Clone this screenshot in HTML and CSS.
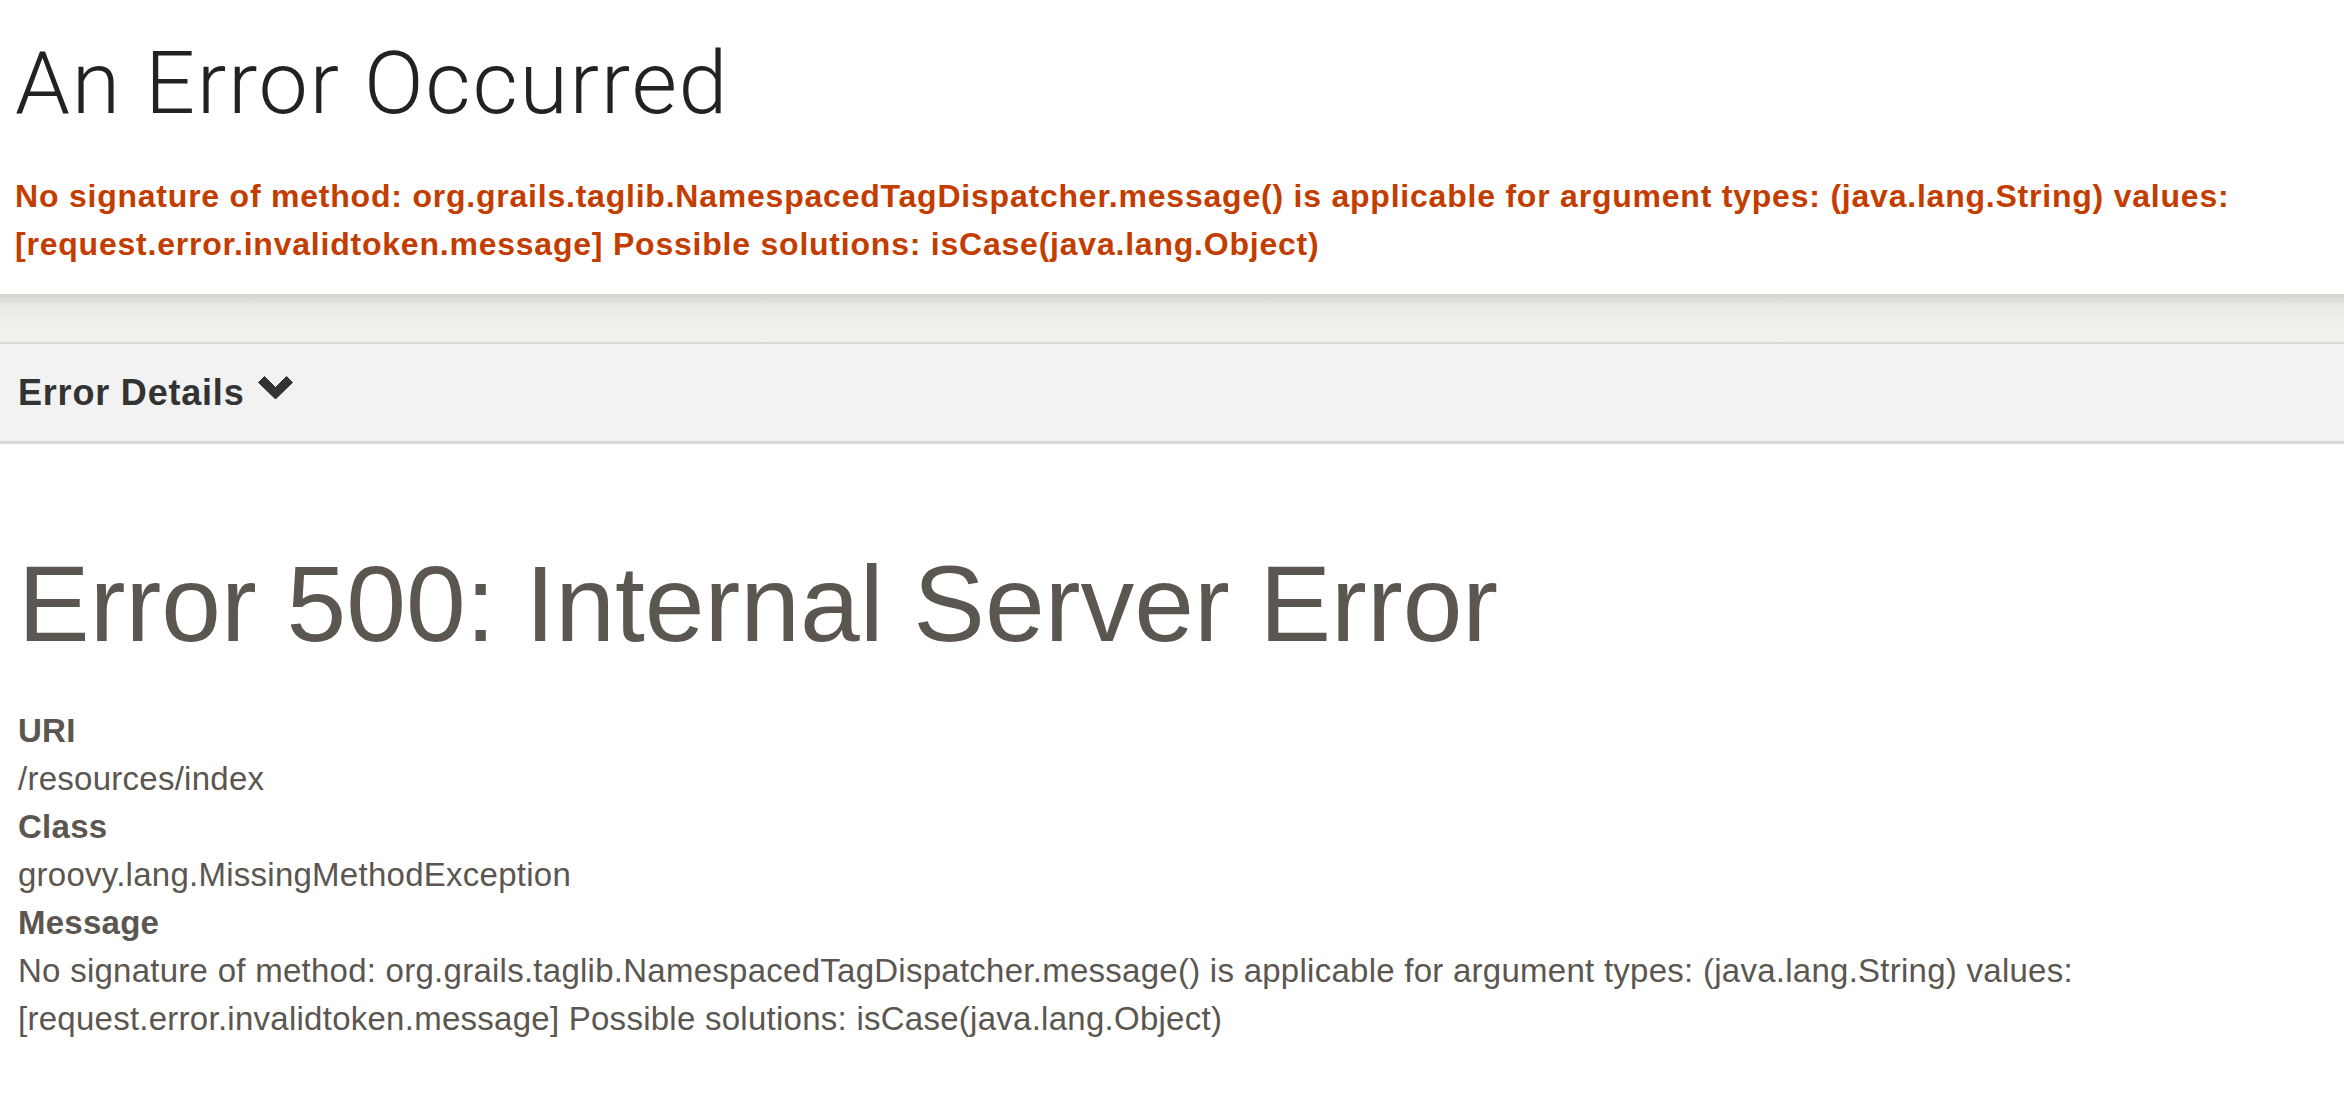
FILE: index.html
```html
<!DOCTYPE html>
<html lang="en">
<head>
<meta charset="utf-8">
<title>An Error Occurred</title>
<link rel="stylesheet" href="styles.css">
</head>
<body>
<header class="top">
  <h1 class="title">An Error Occurred</h1>
  <p class="lead">No signature of method: org.grails.taglib.NamespacedTagDispatcher.message() is applicable for argument types: (java.lang.String) values: [request.error.invalidtoken.message] Possible solutions: isCase(java.lang.Object)</p>
</header>
<div class="band"></div>
<div class="details-bar">
  <span class="details-label">Error Details</span>
  <svg class="chevron" viewBox="0 0 35 23" width="35" height="23" aria-hidden="true">
    <polygon points="0.5,6.5 6.5,0.5 17.5,11.5 28.5,0.5 34.5,6.5 17.5,23" fill="#333333" stroke="#333333" stroke-width="1" stroke-linejoin="round"/>
  </svg>
</div>
<main class="content">
  <h1 class="code">Error 500: Internal Server Error</h1>
  <dl class="info">
    <dt>URI</dt>
    <dd>/resources/index</dd>
    <dt>Class</dt>
    <dd>groovy.lang.MissingMethodException</dd>
    <dt>Message</dt>
    <dd>No signature of method: org.grails.taglib.NamespacedTagDispatcher.message() is applicable for argument types: (java.lang.String) values: [request.error.invalidtoken.message] Possible solutions: isCase(java.lang.Object)</dd>
  </dl>
</main>
</body>
</html>
```

FILE: styles.css
```css
html, body {
  margin: 0;
  padding: 0;
  background: #ffffff;
}

body {
  font-family: "Liberation Sans", Arial, sans-serif;
}

.top {
  padding: 34px 60px 26px 15px;
}

.title {
  margin: 0;
  font-family: Roboto, "Liberation Sans", sans-serif;
  font-weight: 300;
  font-size: 88px;
  line-height: 97px;
  letter-spacing: 1.7px;
  color: #222222;
}

.lead {
  margin: 41px 0 0 0;
  font-size: 32px;
  line-height: 48px;
  font-weight: bold;
  letter-spacing: 0.78px;
  color: #c43d00;
}

.band {
  height: 48px;
  background: linear-gradient(#d7d5d0 0px, #e9e8e3 12px, #f0efeb 26px, #f1f0ec 100%);
  border-bottom: 2px solid #d8d8d8;
}

.details-bar {
  display: flex;
  align-items: center;
  gap: 13px;
  height: 97px;
  padding-left: 18px;
  background: #f2f2f2;
  border-bottom: 3px solid #d9d9d9;
}

.details-label {
  font-size: 36px;
  line-height: 97px;
  font-weight: bold;
  letter-spacing: 0.8px;
  color: #333333;
}

.chevron {
  display: block;
  margin-top: -11px;
}

.content {
  padding: 95px 18px 40px 18px;
}

.code {
  margin: 0;
  font-size: 107.4px;
  line-height: 130px;
  font-weight: normal;
  color: #5b5650;
}

.info {
  margin: 38px 0 0 0;
  font-size: 33px;
  line-height: 48px;
  letter-spacing: 0.26px;
  color: #5b5650;
}

.info dt {
  font-weight: bold;
}

.info dd {
  margin: 0;
}
```
